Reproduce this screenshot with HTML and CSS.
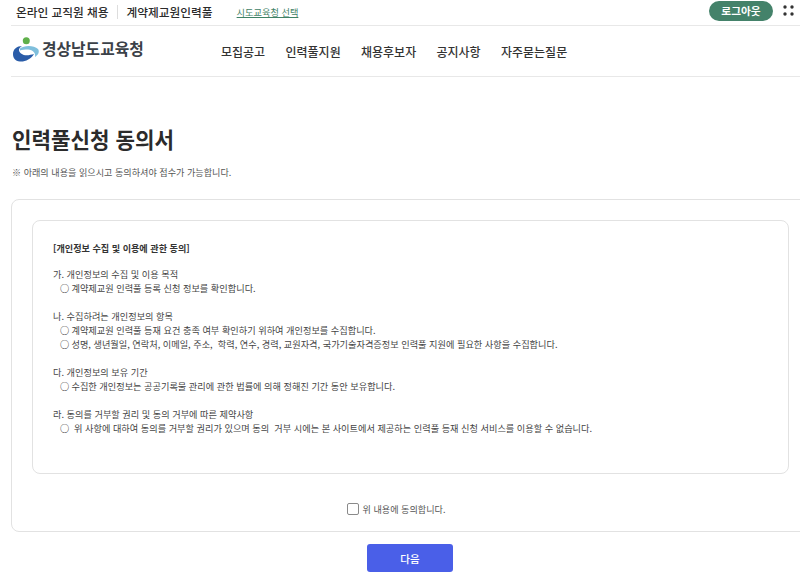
FILE: index.html
```html
<!DOCTYPE html>
<html lang="ko">
<head>
<meta charset="utf-8">
<title>인력풀신청 동의서</title>
<link rel="stylesheet" href="styles.css">
</head>
<body>
<div class="page">
  <header class="topbar">
    <div class="topbar-left">
      <span class="site-a">온라인 교직원 채용</span>
      <span class="sep"></span>
      <span class="site-b">계약제교원인력풀</span>
      <a class="region" href="#">시도교육청 선택</a>
    </div>
    <div class="topbar-right">
      <a class="logout" href="#">로그아웃</a>
      <svg class="dots" width="11" height="11" viewBox="0 0 11 11"><circle cx="2" cy="2" r="1.7"/><circle cx="9" cy="2" r="1.7"/><circle cx="2" cy="9" r="1.7"/><circle cx="9" cy="9" r="1.7"/></svg>
    </div>
  </header>
  <nav class="mainnav">
    <a class="logo" href="#">
      <svg width="28" height="26" viewBox="0 0 28 26">
        <circle cx="14.300" cy="3.800" r="3.500" fill="#5fb04a"/>
        <path d="M1 17C1 12 5 9 10 9C6.500 11 6 14 9 16.500C13 19.500 18 18 22 17C19 22 13 25 8 24.500C3 24 1 21 1 17Z" fill="#2a5ca8"/>
        <path d="M8 11.500C12 8 22 8 26 12C28 15 26 18 23 20C24 16 21 13 16 12.500C13 12.500 10 12.500 8 13.500Z" fill="#7fbfdc"/>
      </svg>
      <span class="logo-text">경상남도교육청</span>
    </a>
    <ul class="menu">
      <li>모집공고</li>
      <li>인력풀지원</li>
      <li>채용후보자</li>
      <li>공지사항</li>
      <li>자주묻는질문</li>
    </ul>
  </nav>
  <main class="content">
    <h1 class="title">인력풀신청 동의서</h1>
    <p class="notice">※ 아래의 내용을 읽으시고 동의하셔야 접수가 가능합니다.</p>
    <section class="card">
      <div class="terms">
        <p class="terms-head">[개인정보 수집 및 이용에 관한 동의]</p>
        <div class="block">
          <p>가. 개인정보의 수집 및 이용 목적</p>
          <p class="item"><span class="mark">○</span> 계약제교원 인력풀 등록 신청 정보를 확인합니다.</p>
        </div>
        <div class="block">
          <p>나. 수집하려는 개인정보의 항목</p>
          <p class="item"><span class="mark">○</span> 계약제교원 인력풀 등재 요건 충족 여부 확인하기 위하여 개인정보를 수집합니다.</p>
          <p class="item"><span class="mark">○</span> 성명, 생년월일, 연락처, 이메일, 주소,&nbsp; 학력, 연수, 경력, 교원자격, 국가기술자격증정보 인력풀 지원에 필요한 사항을 수집합니다.</p>
        </div>
        <div class="block">
          <p>다. 개인정보의 보유 기간</p>
          <p class="item"><span class="mark">○</span> 수집한 개인정보는 공공기록물 관리에 관한 법률에 의해 정해진 기간 동안 보유합니다.</p>
        </div>
        <div class="block">
          <p>라. 동의를 거부할 권리 및 동의 거부에 따른 제약사항</p>
          <p class="item"><span class="mark">○</span>&nbsp; 위 사항에 대하여 동의를 거부할 권리가 있으며 동의&nbsp; 거부 시에는 본 사이트에서 제공하는 인력풀 등재 신청 서비스를 이용할 수 없습니다.</p>
        </div>
      </div>
      <label class="agree"><input type="checkbox" class="agree-box"><span>위 내용에 동의합니다.</span></label>
    </section>
    <div class="actions"><button class="next" type="button">다음</button></div>
  </main>
</div>
</body>
</html>
```
FILE: styles.css
```css
* { box-sizing: border-box; }
html, body { margin: 0; padding: 0; height: 100%; overflow: hidden; background: #fff; }
body { font-family: "Noto Sans CJK KR", "Noto Sans", sans-serif; color: #333; }
p, ul, h1 { margin: 0; padding: 0; }
a { text-decoration: none; color: inherit; }
.page { width: 800px; padding-left: 11px; }
.topbar { height: 26px; display: flex; justify-content: space-between; align-items: center; border-bottom: 1px solid #e8e8e8; padding: 0 6px 2px 5px; }
.topbar-left { display: flex; align-items: center; }
.site-a, .site-b { font-size: 11.700px; font-weight: 500; color: #2b2b2b; }
.sep { width: 1px; height: 14px; background: #ddd; margin: 0 8.500px; }
.region { margin-left: 24px; font-size: 9.200px; color: #3f8266; text-decoration: underline; }
.topbar-right { display: flex; align-items: center; gap: 10px; margin-bottom: 2px; }
.logout { width: 64px; height: 20px; border-radius: 10px; background: #44826a; color: #fff; font-size: 10.700px; font-weight: 700; display: flex; align-items: center; justify-content: center; }
.dots { fill: #333; }
.mainnav { height: 51px; display: flex; align-items: center; border-bottom: 1px solid #e8e8e8; }
.logo { width: 210px; display: flex; align-items: center; gap: 2px; padding: 0 0 2px 1px; }
.logo-text { font-size: 15.800px; font-weight: 700; color: #3b4148; margin-top: -3px; }
.menu { list-style: none; display: flex; gap: 20.300px; font-size: 12px; font-weight: 500; color: #333; }
.title { margin: 45px 0 0 1px; font-size: 21.200px; font-weight: 700; line-height: 34px; color: #2b2b2b; }
.notice { margin: 9px 0 0 1px; font-size: 9.100px; line-height: 14px; color: #555; }
.card { margin-top: 20px; width: 798px; height: 333px; border: 1px solid #e2e2e2; border-radius: 8px; padding: 20px 20px 0; }
.terms { width: 757px; height: 254px; border: 1px solid #e2e2e2; border-radius: 8px; padding: 20px 20px 0; font-size: 9.180px; line-height: 14px; color: #444; }
.terms-head { font-weight: 700; color: #333; margin-bottom: 12px; font-size: 9.100px; }
.block { margin-bottom: 14px; }
.item { padding-left: 7px; line-height: 14px; }
.mark { color: #111; margin-right: -0.300px; }
.agree { display: flex; align-items: center; justify-content: center; gap: 4px; margin-top: 28px; padding-right: 28px; font-size: 9.100px; color: #555; }
.agree-box { appearance: none; width: 12px; height: 12px; margin: 0; border: 1px solid #8a8a8a; border-radius: 2px; background: #fff; }
.actions { width: 798px; display: flex; justify-content: center; margin-top: 12px; }
.next { width: 86px; height: 28px; border: 0; border-radius: 3px; background: #4a5fe8; color: #fff; font: 500 10.500px "Noto Sans CJK KR", sans-serif; }
```
